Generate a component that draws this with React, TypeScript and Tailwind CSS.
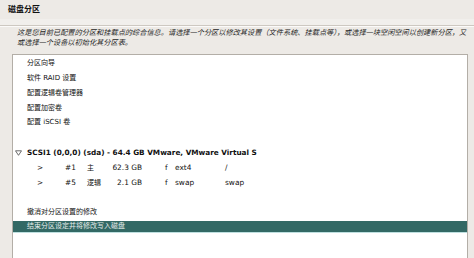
export default function App() {
  const font = "font-['DejaVu_Sans','Noto_Sans_CJK_SC',sans-serif]";

  const menu = ["分区向导", "软件 RAID 设置", "配置逻辑卷管理器", "配置加密卷", "配置 iSCSI 卷"];

  const parts = [
    { n: "#1", type: "主", size: "62.3 GB", fs: "ext4", mount: "/" },
    { n: "#5", type: "逻辑", size: "2.1 GB", fs: "swap", mount: "swap" },
  ];

  return (
    <div className={`flex h-[258px] w-[474px] flex-col overflow-hidden bg-[#edeae6] text-[#111] ${font}`}>
      {/* Title */}
      <div className="flex h-[19px] items-center pl-[8px] text-[8px] font-bold">磁盘分区</div>
      <div className="h-[6px] bg-[#f1efec]" />
      <div className="border-t border-[#cdc8c1]" />
      <div className="border-t border-[#fbfaf9]" />

      {/* Description */}
      <div className="whitespace-nowrap pl-[17px] pt-[1px] text-[7.2px] italic leading-[10px] text-[#1e1e1e]">
        这是您目前已配置的分区和挂载点的综合信息。请选择一个分区以修改其设置（文件系统、挂载点等），或选择一块空闲空间以创建新分区，又
        <br />
        或选择一个设备以初始化其分区表。
      </div>

      {/* List */}
      <div className="ml-[12px] mt-[6px] flex w-[456px] flex-1 flex-col border-l border-r border-t border-[#b3aea7] bg-white pt-[1px] text-[7px]">
        {menu.map((m) => (
          <div key={m} className="flex h-[14.8px] items-center pl-[14px]">
            {m}
          </div>
        ))}
        <div className="h-[14.8px]" />
        <div className="mt-[1px] flex h-[14.8px] items-center text-[7.3px] font-bold">
          <svg width="7" height="6" viewBox="0 0 7 6" className="ml-[2px] mr-[5px]">
            <path d="M0.5 0.8 L6.5 0.8 L3.5 5.3 Z" fill="none" stroke="#5a5a5a" strokeWidth="0.9" />
          </svg>
          SCSI1 (0,0,0) (sda) - 64.4 GB VMware, VMware Virtual S
        </div>
        {parts.map((p) => (
          <div key={p.n} className="flex h-[14.8px] items-center text-[7.4px]">
            <span className="w-[52px] pl-[24px]">&gt;</span>
            <span className="w-[22px]">{p.n}</span>
            <span className="w-[18px] text-[7px]">{p.type}</span>
            <span className="w-[37px] text-right">{p.size}</span>
            <span className="w-[23px]" />
            <span className="w-[10px]">f</span>
            <span className="w-[50px]">{p.fs}</span>
            <span>{p.mount}</span>
          </div>
        ))}
        <div className="h-[14.8px]" />
        <div className="flex h-[14.8px] items-center pl-[14px]">撤消对分区设置的修改</div>
        <div className="mt-[1px] flex h-[12px] items-center border-b border-[#bfe0e0] bg-[#336965] pl-[14px] text-[#e4ecea]">
          结束分区设定并将修改写入磁盘
        </div>
      </div>
    </div>
  );
}
